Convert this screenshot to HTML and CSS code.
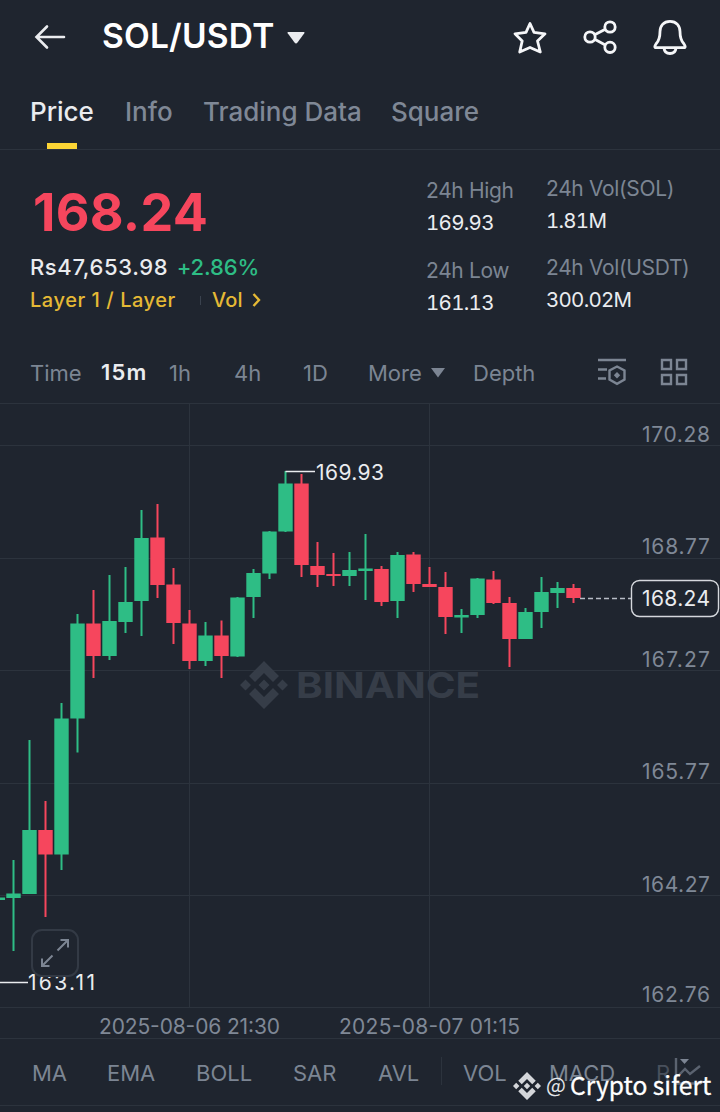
FILE: index.html
```html
<!DOCTYPE html>
<html lang="en">
<head>
  <meta charset="UTF-8" />
  <meta name="viewport" content="width=device-width, initial-scale=1" />
  <title>SOL/USDT</title>
  <link rel="stylesheet" href="styles.css">
</head>
<body>
  <header class="topbar">
    <svg class="back" width="32" height="26" viewBox="0 0 32 26"><path d="M13 2.5 2.500 13 13 23.500M3 13h27"/></svg>
    <h1>SOL/USDT</h1>
    <svg class="caret" width="18" height="12" viewBox="0 0 18 12"><path d="M1 0h16q1 0 .3 1.200L10.500 10.500Q9 12.500 7.500 10.500L.7 1.200Q0 0 1 0Z"/></svg>
    <div class="actions">
      <svg width="36" height="36" viewBox="0 0 36 36"><path d="M18 4.500 22 13.300 33 14.800 25.500 22 28.300 33 18 28.500 7.700 33 10.200 22 3 14.800 14 13.300Z"/></svg>
      <svg width="36" height="36" viewBox="0 0 36 36"><circle cx="8" cy="18" r="5.200"/><circle cx="28" cy="8" r="5.200"/><circle cx="28" cy="28.300" r="5.200"/><path d="M12.700 15.700 23.300 10.300M12.700 20.300 23.300 26"/></svg>
      <svg width="36" height="36" viewBox="0 0 36 36"><path d="M18 2.300C11.500 2.300 8 7 8 12.500Q8 20.500 4.300 24.500Q1.500 28.700 4 28.700H32Q34.500 28.700 31.700 24.500Q28 20.500 28 12.500C28 7 24.500 2.300 18 2.300ZM12 29q.5 5.500 6 5.500t6-5.500"/></svg>
    </div>
  </header>

  <nav class="tabs">
    <a class="active">Price</a>
    <a>Info</a>
    <a>Trading Data</a>
    <a>Square</a>
  </nav>

  <section class="summary">
    <div class="price-box">
      <div class="last-price">168.24</div>
      <div class="fiat">Rs47,653.98 <span class="change">+2.86%</span></div>
      <div class="tags">
        <span class="tag">Layer 1 / Layer</span>
        <i class="sep"></i>
        <span class="vol-tag">Vol</span>
        <svg width="9" height="16" viewBox="0 0 9 16"><path d="M1.500 2 7 8 1.500 14"/></svg>
      </div>
    </div>
    <dl class="stats">
      <dt>24h High</dt><dd>169.93</dd>
      <dt class="low">24h Low</dt><dd>161.13</dd>
    </dl>
    <dl class="stats volume">
      <dt>24h Vol(SOL)</dt><dd>1.81M</dd>
      <dt class="low">24h Vol(USDT)</dt><dd>300.02M</dd>
    </dl>
  </section>

  <nav class="intervals">
    <a>Time</a>
    <a class="active">15m</a>
    <a>1h</a>
    <a>4h</a>
    <a>1D</a>
    <a class="more">More <svg width="14" height="10" viewBox="0 0 14 10"><path d="M0 0H14L7 9.500Z"/></svg></a>
    <a>Depth</a>
    <svg class="tool" width="30" height="28" viewBox="0 0 30 28"><path d="M1 2H29M1 11.500H10M1 20.500H9"/><path d="M20 8.500 27.500 12.500V21.500L20 25.800 12.500 21.500V12.500Z"/><path class="solid" d="M20 14 23.200 17.200 20 20.400 16.800 17.200Z"/></svg>
    <svg class="tool" width="28" height="28" viewBox="0 0 28 28"><path d="M2 2H11V11H2ZM17 2H26V11H17ZM2 17H11V26H2ZM17 17H26V26H17Z"/></svg>
  </nav>

  <main class="chart">
    <svg width="720" height="636" viewBox="0 402 720 636">
      <path class="grid" d="M0 403.500H720M0 445.500H720M0 558.500H720M0 670.500H720M0 783.500H720M0 895.500H720M0 1007.500H720M189.500 404V1007M429.500 404V1007"/>
      <g class="brand">
        <g transform="translate(264 685)">
          <path d="M0-24 15-9 9-3 0-12-9-3-15-9ZM0 24 15 9 9 3 0 12-9 3-15 9ZM0-5.500 5.500 0 0 5.500-5.500 0ZM-18.500-5.500-13 0-18.500 5.500-24 0ZM18.500-5.500 24 0 18.500 5.500 13 0Z"/>
        </g>
        <text x="296" y="698" textLength="184" lengthAdjust="spacingAndGlyphs">BINANCE</text>
      </g>
      <g id="candles"></g>
      <path class="pointer" d="M285.500 471.500H315M0 982.500H28"/>
      <path class="price-line" d="M580 598.500H631"/>
      <text class="mark" x="316" y="480" textLength="68">169.93</text>
      <text class="mark" x="28" y="990" textLength="67">163.11</text>
      <g class="axis">
        <text x="642" y="442" textLength="68">170.28</text>
        <text x="642" y="554" textLength="68">168.77</text>
        <text x="642" y="667" textLength="68">167.27</text>
        <text x="642" y="779" textLength="68">165.77</text>
        <text x="642" y="892" textLength="68">164.27</text>
        <text x="642" y="1002" textLength="68">162.76</text>
        <text x="99" y="1034" textLength="181">2025-08-06 21:30</text>
        <text x="339" y="1034" textLength="181">2025-08-07 01:15</text>
      </g>
      <rect class="price-tag" x="631.500" y="580.500" width="87" height="36" rx="8"/>
      <text class="mark" x="642" y="606" textLength="68">168.24</text>
      <rect class="expand" x="32" y="930" width="46" height="46" rx="10"/>
      <path class="expand-icon" d="M57.500 950.500 68 940M60.500 940H68V947.500M52.500 955.500 42 966M42 958.500V966H49.500"/>
    </svg>
  </main>

  <footer class="indicators">
    <a>MA</a>
    <a>EMA</a>
    <a>BOLL</a>
    <a>SAR</a>
    <a>AVL</a>
    <a class="vol">VOL</a>
    <a>MACD</a>
    <a class="faded">R</a>
    <svg class="chart-icon" width="29" height="30" viewBox="0 0 29 30"><path d="M2 1V26.500H27M4 19 11 12 16 17 26 9"/><path class="solid" d="M6 2H15L10.500 7Z"/></svg>
  </footer>

  <div class="watermark">
    <svg width="28" height="28" viewBox="-24 -24 48 48"><path d="M0-24 15-9 9-3 0-12-9-3-15-9ZM0 24 15 9 9 3 0 12-9 3-15 9ZM0-5.500 5.500 0 0 5.500-5.500 0ZM-18.500-5.500-13 0-18.500 5.500-24 0ZM18.500-5.500 24 0 18.500 5.500 13 0Z"/></svg>
    <span class="at">@</span>
    <span class="author">Crypto sifert</span>
  </div>

  <script src="chart.js"></script>
</body>
</html>
```

FILE: styles.css
```css
* {
  box-sizing: border-box;
}
body {
  margin: 0;
  width: 720px;
  height: 1112px;
  overflow: hidden;
  position: relative;
  background: #1f252f;
  color: #eaecef;
  font-family: Inter, "Liberation Sans", sans-serif;
  font-size: 21px;
}
svg {
  display: block;
  flex: none;
}
a, span, dt, dd, h1, .fiat {
  white-space: nowrap;
}

/* header */
.topbar {
  display: flex;
  align-items: center;
  height: 74px;
  padding: 0 32px 0 34px;
}
.topbar h1 {
  width: 185px;
  margin: -2px 0 0 36px;
  font-size: 33.5px;
  font-weight: 600;
  letter-spacing: 0.2px;
  color: #fff;
}
.back {
  fill: none;
  stroke: #eaecef;
  stroke-width: 2.6;
  stroke-linecap: round;
}
.caret {
  margin-top: 2px;
  fill: #eaecef;
}
.actions {
  display: flex;
  gap: 34px;
  margin-left: auto;
}
.actions svg {
  fill: none;
  stroke: #f5f6f8;
  stroke-width: 2.8;
  stroke-linejoin: round;
}

.tabs {
  display: grid;
  grid-template-columns: 95px 78px 188px auto;
  height: 76px;
  padding: 21px 30px 0;
  border-bottom: 1px solid #2c333d;
  font-size: 26px;
  font-weight: 500;
  line-height: 34px;
  color: #7f8896;
}
.tabs .active {
  color: #eaecef;
}
.tabs .active::after {
  content: "";
  display: block;
  width: 30px;
  height: 6px;
  margin: 14px 0 0 17px;
  background: #fcd535;
}

/* price summary */
.summary {
  display: flex;
  height: 192px;
  padding: 27px 0 0 30px;
}
.price-box {
  width: 396px;
}
.last-price {
  height: 76px;
  padding-left: 3px;
  font-size: 52px;
  font-weight: 700;
  letter-spacing: 0.3px;
  line-height: 72px;
  color: #f6465d;
}
.fiat {
  height: 28px;
  font-size: 22px;
  font-weight: 500;
  letter-spacing: 0.62px;
  line-height: 28px;
}
.change {
  margin-left: 2px;
  letter-spacing: -0.15px;
  color: #2ebd85;
}
.tags {
  display: flex;
  align-items: center;
  height: 38px;
  font-size: 20px;
  font-weight: 500;
  letter-spacing: 0.55px;
  color: #e5b935;
}
.tag {
  width: 170px;
}
.sep {
  width: 1px;
  height: 9px;
  margin-right: 11px;
  background: #3a424e;
}
.vol-tag {
  width: 40px;
  letter-spacing: 0.2px;
}
.tags svg {
  fill: none;
  stroke: #e5b935;
  stroke-width: 2.4;
}
.stats {
  width: 120px;
  margin: 0;
  line-height: 28px;
}
.stats dt {
  letter-spacing: -0.35px;
  color: #7c8593;
}
.stats dd {
  height: 32px;
  margin: 0;
  line-height: 36px;
  font-size: 20.5px;
  letter-spacing: -0.7px;
  font-variant-numeric: tabular-nums;
}
.stats .low {
  margin-top: 20px;
}
.volume {
  margin-top: -2px;
}
.volume dd {
  letter-spacing: -0.75px;
}
.volume .low {
  margin-top: 19px;
}

.intervals {
  display: grid;
  grid-template-columns: 71px 68px 65px 69px 65px 105px 124px 63px 30px;
  height: 60px;
  padding: 0 0 0 30px;
  align-items: center;
  font-size: 22px;
  color: #7c8593;
}
.intervals a {
  padding-top: 1px;
}
.intervals .active {
  padding-top: 0;
  font-weight: 600;
  letter-spacing: 1.2px;
  color: #eaecef;
}
.more {
  display: flex;
  align-items: center;
  gap: 9px;
}
.more svg {
  fill: #7c8593;
}
.tool {
  fill: none;
  stroke: #7c8593;
  stroke-width: 2.4;
}
.solid {
  fill: #7c8593;
  stroke: none;
}

/* chart */
.chart {
  height: 636px;
}
.chart text {
  font-size: 21px;
}
.grid {
  stroke: #2c333d;
}
.brand {
  fill: #363d48;
}
.chart .brand text {
  font-size: 36px;
  font-weight: 700;
}
.axis {
  fill: #7f8896;
}
.mark {
  fill: #eaecef;
}
.pointer {
  stroke: #eaecef;
  stroke-width: 1.4;
}
.price-line {
  stroke: #b7bdc6;
  stroke-width: 1.3;
  stroke-dasharray: 5 3;
}
.price-tag {
  fill: #1f252f;
  stroke: #d5d8dd;
  stroke-width: 1.4;
}
.up {
  fill: #2ebd85;
}
.down {
  fill: #f6465d;
}
.expand {
  fill: #1f252f;
  stroke: #333a45;
  stroke-width: 2;
}
.expand-icon {
  fill: none;
  stroke: #7c8593;
  stroke-width: 2;
}

.indicators {
  display: grid;
  grid-template-columns: 75px 89px 97px 85px 85px 86px 107px 18px 30px;
  height: 68px;
  padding-left: 32px;
  align-items: center;
  border-top: 1px solid #2c333d;
  border-bottom: 1px solid #2c333d;
  font-size: 22px;
  color: #7c8593;
}
.indicators a {
  padding-top: 2px;
}
.indicators .faded {
  opacity: 0.45;
}
.indicators .vol {
  position: relative;
}
.indicators .vol::before {
  content: "";
  position: absolute;
  left: -22px;
  top: -1px;
  width: 1px;
  height: 28px;
  background: #2c333d;
}
.chart-icon {
  fill: none;
  stroke: #5b6370;
  stroke-width: 2.4;
}

.watermark {
  position: absolute;
  left: 513px;
  top: 1066px;
  display: flex;
  align-items: center;
  height: 38px;
  font-family: "Noto Sans CJK SC", "Noto Sans", sans-serif;
  font-size: 24.6px;
  color: #fff;
}
.watermark svg {
  margin-top: 1px;
  fill: #d4d6da;
}
.at {
  width: 24px;
  margin: -3px 0 0 5px;
  font-size: 21px;
  color: #e4e6e9;
}
.author {
  margin-top: -3px;
  -webkit-text-stroke: 0.3px #fff;
}
```

FILE: chart.js
```js
// [high, low, body top, body bottom, direction], one candle every 16px
const candles = [
  [860, 951, 893.5, 898, 'up'],
  [740, 894, 830, 894, 'up'],
  [801, 917, 830, 854.5, 'down'],
  [703, 870, 718.5, 854.5, 'up'],
  [614, 752.5, 623.5, 718.5, 'up'],
  [590, 678, 623.5, 656, 'down'],
  [575, 660, 621, 656, 'up'],
  [567, 633, 602, 622, 'up'],
  [510, 636, 538, 601, 'up'],
  [504, 598, 537.5, 585, 'down'],
  [568, 644, 584.5, 623, 'down'],
  [610, 669, 623.5, 661, 'down'],
  [622, 666, 635.5, 661, 'up'],
  [620.5, 678, 635.5, 656, 'down'],
  [597, 657, 597.5, 656.5, 'up'],
  [569, 618, 573, 597, 'up'],
  [531, 579, 531.5, 573.5, 'up'],
  [471, 532, 483.5, 531.5, 'up'],
  [474, 577, 483.5, 565, 'down'],
  [542, 587, 566, 575, 'down'],
  [553, 586, 574, 576, 'down'],
  [552, 586, 570, 576, 'up'],
  [534, 600, 568.5, 571, 'up'],
  [566, 606, 569, 602, 'down'],
  [552, 618, 555, 601, 'up'],
  [552, 592, 554.5, 584, 'down'],
  [567, 587, 584, 587, 'down'],
  [572, 634, 587, 617, 'down'],
  [609, 633, 615, 617.5, 'up'],
  [578, 618, 578.5, 615, 'up'],
  [571, 604, 579.5, 603, 'down'],
  [597, 667, 603, 639, 'down'],
  [608, 639, 612, 639, 'up'],
  [577, 628, 592, 612, 'up'],
  [582, 608, 588, 593, 'up'],
  [584, 603, 588, 598, 'down']
];

const layer = document.getElementById('candles');
let shapes = '<rect class="up" x="0" y="897.5" width="5" height="2.5"/>';
candles.forEach(([high, low, top, bottom, dir], i) => {
  const x = 13.5 + i * 16;
  shapes += `<rect class="${dir}" x="${x - 1}" y="${high}" width="2" height="${low - high}"/>`;
  shapes += `<rect class="${dir}" x="${x - 7.2}" y="${top}" width="14.4" height="${bottom - top}"/>`;
});
layer.innerHTML = shapes;
```
